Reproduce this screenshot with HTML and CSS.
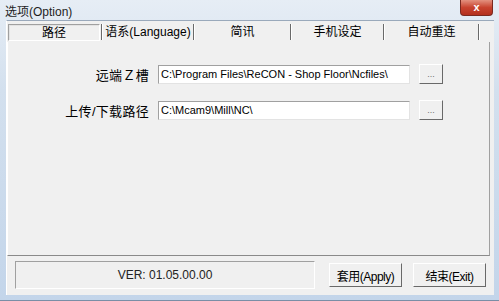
FILE: index.html
```html
<!DOCTYPE html>
<html lang="zh">
<head>
    <meta charset="UTF-8">
    <title>选项(Option)</title>
    <link rel="stylesheet" href="styles.css">
</head>
<body>

    <div class="window">
        <div class="titlebar">
            <span class="title">选项(Option)</span>
            <div class="close">x</div>
        </div>
        <div class="client">
            <div class="tabs">
                <div class="tab active tab-path">路径</div>
                <span class="sep"></span>
                <div class="tab tab-lang">语系(Language)</div>
                <span class="sep"></span>
                <div class="tab tab-msg">简讯</div>
                <span class="sep"></span>
                <div class="tab tab-phone">手机设定</div>
                <span class="sep"></span>
                <div class="tab tab-reconnect">自动重连</div>
                <span class="sep"></span>
            </div>

            <div class="panel">
                <div class="row">
                    <label for="remote">远端Ｚ槽</label>
                    <input type="text" id="remote" class="path" value="C:\Program Files\ReCON - Shop Floor\Ncfiles\">
                    <button class="browse">...</button>
                </div>
                <div class="row">
                    <label for="upload">上传/下载路径</label>
                    <input type="text" id="upload" class="path" value="C:\Mcam9\Mill\NC\">
                    <button class="browse">...</button>
                </div>
            </div>

            <div class="footer">
                <div class="status">VER: 01.05.00.00</div>
                <button class="btn">套用(Apply)</button>
                <button class="btn">结束(Exit)</button>
            </div>
        </div>
    </div>

</body>
</html>
```

FILE: styles.css
```css
body {
    margin: 0;
    font-family: "Liberation Sans", "Noto Sans CJK SC", sans-serif;
    font-size: 12px;
    color: #000;
    background: #fff;
}
.window {
    width: 499px;
    height: 301px;
    box-sizing: border-box;
    background: linear-gradient(#e6edf5, #d3e0ee 30%, #c3d5ea);
    border-bottom: 1px solid #7a8ea6;
}
.titlebar {
    height: 20px;
    display: flex;
    align-items: center;
    justify-content: space-between;
    padding-left: 5px;
}
.title {
    font-size: 12px;
    color: #1e1e1e;
    padding-top: 1px;
}
.close {
    width: 33px;
    height: 16px;
    margin-right: 6px;
    align-self: flex-start;
    box-sizing: border-box;
    border: 1px solid #7a2a20;
    border-top: none;
    border-radius: 0 0 4px 4px;
    background: linear-gradient(#e3917f, #c8432f 50%, #b3301e);
    color: #fff;
    font-weight: bold;
    font-size: 11px;
    text-align: center;
    line-height: 14px;
}
.client {
    margin-left: 6px;
    width: 488px;
    height: 275px;
    box-sizing: border-box;
    background: #f0f0f0;
    border-left: 1px solid #fff;
    border-top: 1px solid #9aa9bb;
}
.tabs {
    display: flex;
    align-items: center;
    height: 20px;
    padding: 1px 0 0 1px;
}
.tab {
    height: 17px;
    line-height: 17px;
    text-align: center;
    box-sizing: border-box;
}
.tab-path { width: 92px; }
.tab-lang { width: 88px; }
.tab-msg { width: 93px; }
.tab-phone { width: 89px; }
.tab-reconnect { width: 91px; }
.tab.active {
    border: 1px solid #a0a0a0;
    border-right-color: #fff;
    border-bottom-color: #fff;
    box-shadow: inset 1px 1px 0 #e3e3e3;
}
.sep {
    width: 1px;
    height: 16px;
    margin: 0 1px;
    background: #6a6a6a;
    border-right: 1px solid #fff;
}
.panel {
    width: 483px;
    height: 214px;
    box-sizing: border-box;
    border-left: 1px solid #fff;
    border-right: 1px solid #a0a0a0;
    border-bottom: 1px solid #8a8a8a;
    padding-top: 22px;
    display: flex;
    flex-direction: column;
    gap: 16px;
}
.row {
    display: flex;
    align-items: center;
    height: 20px;
}
.row label {
    width: 141px;
    margin-right: 9px;
    text-align: right;
    font-size: 13px;
    letter-spacing: 0.3px;
}
.path {
    width: 252px;
    height: 19px;
    box-sizing: border-box;
    padding: 0 2px;
    border: 1px solid #a0a0a0;
    border-right-color: #e3e3e3;
    border-bottom-color: #e3e3e3;
    background: #fff;
    font-family: "Liberation Sans", sans-serif;
    font-size: 11px;
    color: #000;
}
.browse {
    width: 24px;
    height: 20px;
    margin-left: 9px;
    padding: 0;
    box-sizing: border-box;
    border: 1px solid #fff;
    border-right-color: #696969;
    border-bottom-color: #696969;
    background: #f0f0f0;
    font-size: 9px;
    color: #707070;
    line-height: 14px;
}
.footer {
    display: flex;
    align-items: center;
    padding: 5px 0 0 8px;
}
.status {
    width: 300px;
    height: 28px;
    line-height: 26px;
    box-sizing: border-box;
    border: 1px solid #a0a0a0;
    border-right-color: #fff;
    border-bottom-color: #fff;
    text-align: center;
    font-size: 12px;
    color: #222;
}
.btn {
    width: 73px;
    height: 24px;
    margin-left: 14px;
    padding: 0;
    box-sizing: border-box;
    border: 1px solid #fff;
    border-right-color: #696969;
    border-bottom-color: #696969;
    background: #f0f0f0;
    font-family: "Liberation Sans", "Noto Sans CJK SC", sans-serif;
    font-size: 12px;
    letter-spacing: -0.5px;
    color: #000;
}
.btn + .btn {
    margin-left: 11px;
}
```
